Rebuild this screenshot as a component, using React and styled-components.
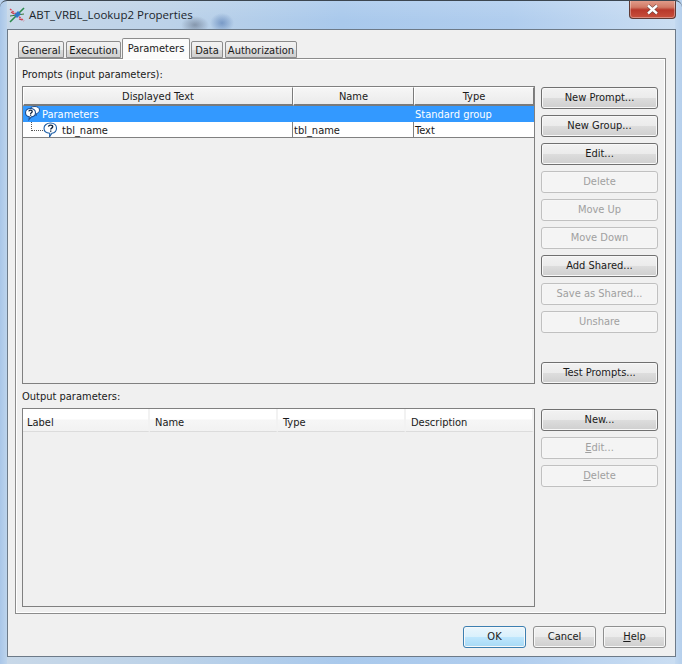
import React from "react";
import styled, { createGlobalStyle } from "styled-components";

const Global = createGlobalStyle`
  html, body { margin: 0; padding: 0; background: #b9d2ee; }
  * { box-sizing: border-box; }
  body { font-family: "DejaVu Sans Condensed", "DejaVu Sans", sans-serif; font-stretch: condensed; font-size: 11px; color: #1a1a1a; }
`;

const Win = styled.div`
  width: 682px; height: 664px; display: flex; flex-direction: column;
  padding: 0 6px 7px 7px; border-radius: 7px 7px 0 0; overflow: hidden;
  border-top: 1px solid #3c4650;
  background:
    radial-gradient(ellipse 12px 10px at 222px 22px, rgba(70,110,170,.55), transparent),
    radial-gradient(ellipse 14px 9px at 195px 24px, rgba(70,80,100,.45), transparent),
    linear-gradient(90deg, #a9c6e8 0, #bdd4ec 7px, transparent 7px, transparent 675px, #c3d9f0 675px, #b5cfec 682px),
    linear-gradient(180deg, rgba(255,255,255,.12), transparent 20px),
    linear-gradient(90deg, #c8d8e8 0%, #bcd2e8 25%, #a9c9ec 50%, #b0cdee 75%, #cbdef2 100%);
`;
const TitleBar = styled.div`
  height: 28px; flex: none; display: flex; align-items: flex-start; gap: 4px; padding-left: 1px;
`;
const AppIcon = styled.svg`width: 16px; height: 16px; margin: 6px 0 0 1px; flex: none;`;
const TitleText = styled.div`
  font-family: "Open Sans", sans-serif; font-stretch: normal; font-size: 11.5px; line-height: 16px; margin-top: 6px; color: #20262c;
`;
const Close = styled.div`
  margin-left: auto; width: 47px; height: 19px; margin-top: -1px; flex: none;
  display: flex; align-items: center; justify-content: center;
  border: 1px solid #5f3a34; border-top: none; border-radius: 0 0 4px 4px;
  background: linear-gradient(180deg, #e4a08e 0%, #d27a66 40%, #b8382a 55%, #c8503c 100%);
  box-shadow: inset 0 0 0 1px rgba(255,255,255,.35);
`;
const Client = styled.div`
  flex: 1; display: flex; flex-direction: column; background: #f0f0f0;
  border: 1px solid #6d7a88; padding: 8px 9px 7px 7px; min-height: 0;
`;
const TabStrip = styled.div`display: flex; align-items: flex-end; height: 21px; padding-left: 3px; position: relative; z-index: 1;`;
const Tab = styled.div`
  width: ${p => p.$w}px; margin-left: ${p => p.$ml || 0}px;
  height: ${p => (p.$active ? 21 : 17)}px;
  display: flex; align-items: ${p => (p.$active ? "flex-start" : "center")}; justify-content: center;
  padding-top: ${p => (p.$active ? 2 : 1)}px;
  line-height: 15px; color: #1a1a1a;
  border: 1px solid #8c8c8c; border-bottom: ${p => (p.$active ? "none" : "1px solid #8c8c8c")};
  border-radius: 2px 2px 0 0;
  background: ${p => (p.$active ? "#fbfbfb" : "linear-gradient(180deg,#f2f2f2 0%,#ebebeb 50%,#dcdcdc 51%,#cfcfcf 100%)")};
  margin-bottom: ${p => (p.$active ? 0 : 1)}px;
`;
const Panel = styled.div`
  flex: none; width: 651px; height: 556px; margin-top: -1px;
  border: 1px solid #8c8c8c; box-shadow: inset 0 0 0 1px #fff;
  background: #f0f0f0; padding: 7px 6px 0 6px; display: flex; gap: 6px;
`;
const Col = styled.div`width: 513px; flex: none; display: flex; flex-direction: column;`;
const Label = styled.div`height: 15px; line-height: 17px; margin-bottom: ${p => p.$mb}px; margin-top: ${p => p.$mt || 0}px;`;
const Table = styled.div`
  height: ${p => p.$h}px; flex: none; background: #f0f0f0; border: 1px solid #808080;
`;
const PromptGrid = styled.div`display: grid; grid-template-columns: 270px 121px 120px;`;
const Head = styled.div`
  height: 19px; line-height: 18px; text-align: center;
  border: 1px solid #fff; border-right-color: #7a7a7a; border-bottom: 2px solid #7a7a7a;
  background: linear-gradient(180deg, #f6f6f6, #ebebeb);
`;
const Row = styled.div`
  display: grid; grid-column: 1 / -1; grid-template-columns: 270px 121px 120px; height: 16px;
  background: ${p => (p.$sel ? "#3399ff" : "#fff")}; color: ${p => (p.$sel ? "#fff" : "#1a1a1a")};
  border-bottom: ${p => (p.$sel ? "none" : "1px solid #808080")};
`;
const Cell = styled.div`
  height: 16px; line-height: 17px; padding-left: 1px; display: flex; align-items: flex-start; white-space: nowrap;
  border-right: ${p => (p.$line ? "1px solid #808080" : "none")};
`;
const Connector = styled.span`
  width: 12px; height: 9px; margin-left: 7px; flex: none;
  border-left: 1px dotted #555; border-bottom: 1px dotted #555;
`;
const Bubble = styled.svg`width: 16px; height: 16px; flex: none; margin-right: ${p => p.$mr}px;`;
const OutGrid = styled.div`display: grid; grid-template-columns: 127px 128px 128px 1fr;`;
const OutHead = styled.div`
  height: 23px; line-height: 27px; padding-left: 5px;
  border-right: 2px solid #f2f2f2; border-bottom: 1px solid #dcdcdc;
  background: linear-gradient(180deg, #fff 0%, #fff 45%, #f6f6f6 50%, #f2f2f2 100%);
  &:first-child { padding-left: 4px; }
`;
const Side = styled.div`width: 117px; flex: none; display: flex; flex-direction: column; gap: 6px; padding-top: 21px;`;
const Btn = styled.div`
  height: 22px; flex: none; display: flex; align-items: center; justify-content: center;
  width: ${p => p.$w || 117}px; margin-top: ${p => p.$mt || 0}px; border-radius: 3px; padding-bottom: 2px;
  border: 1px solid ${p => (p.$def ? "#3c7fb1" : p.$off ? "#c0c0c0" : p.$soft ? "#8e8f8f" : "#707070")};
  color: ${p => (p.$off ? "#a0a0a0" : "#1a1a1a")};
  box-shadow: inset 0 0 0 1px ${p => (p.$off ? "#f6f6f6" : "#f8f8f8")};
  background: ${p => p.$off ? "#f4f4f4" : p.$def
    ? "linear-gradient(180deg,#eaf6fd 0%,#d9f0fc 50%,#bee6fd 51%,#a7d9f5 100%)"
    : "linear-gradient(180deg,#f2f2f2 0%,#ebebeb 50%,#dddddd 51%,#cfcfcf 100%)"};
`;
const Footer = styled.div`display: flex; justify-content: flex-end; gap: 7px; margin-top: 12px;`;

function Ask({ mr, group }) {
  return (
    <Bubble $mr={mr} viewBox="0 0 16 16">
      {group && (
        <path d="M7 1.5c1-.8 2.5-1 4-1 2.7 0 4.5 1.6 4.5 3.6 0 1.7-1.3 3-3 3.4l-.3 2.2-1.7-2z" fill="#fff" stroke="#1d4f91" />
      )}
      {group ? (
        <>
          <path d="M6.5 2.5c3 0 5 1.8 5 4.2s-2 4-4.2 4.2L5 13.5l.3-2.7C3 10.4 1.5 8.9 1.5 6.7c0-2.4 2-4.2 5-4.2z" fill="#fff" stroke="#1d4f91" strokeWidth="1.1" />
          <path d="M4.8 5.4c.2-.8.9-1.2 1.7-1.2 1 0 1.7.5 1.7 1.3 0 1.2-1.6 1.2-1.6 2.4M6.6 8.6v1.1" fill="none" stroke="#10253f" strokeWidth="1.3" />
        </>
      ) : (
        <>
          <path d="M7.5 1c3.6 0 6 2.2 6 5.2 0 2.7-2 4.7-4.6 5L6.5 15l.3-3.8C3.4 11 1 9 1 6.2 1 3.2 3.9 1 7.5 1z" fill="#fff" stroke="#1d5fa8" strokeWidth="1.1" />
          <path d="M5.4 4.6c.3-1 1.2-1.5 2.2-1.5 1.3 0 2.1.7 2.1 1.6 0 1.4-2 1.4-2 2.9M7.7 8.4v1.3" fill="none" stroke="#10253f" strokeWidth="1.4" />
        </>
      )}
    </Bubble>
  );
}

const sideTop = [
  ["New Prompt..."], ["New Group..."], ["Edit..."], ["Delete", 1], ["Move Up", 1], ["Move Down", 1],
  ["Add Shared..."], ["Save as Shared...", 1], ["Unshare", 1],
];

export default function App() {
  return (
    <>
      <Global />
      <Win>
        <TitleBar>
          <AppIcon viewBox="0 0 16 16">
            <path d="M1 2l14 12" stroke="#d9475a" strokeWidth="1.4" strokeDasharray="2 1" />
            <path d="M15 1L1 15" stroke="#2a8a4a" strokeWidth="1.6" />
            <path d="M1 9l14-2" stroke="#3a7a3a" strokeWidth="1" />
            <path d="M5 8l4-4 3 3-4 4z" fill="#2f78c8" />
            <path d="M2 5l3 2M10 12l3 1" stroke="#c43a4a" strokeWidth="1.2" />
          </AppIcon>
          <TitleText>ABT_VRBL_Lookup2 Properties</TitleText>
          <Close>
            <svg width="15" height="11" viewBox="0 0 15 11">
              <path d="M3 1.5l9 8M12 1.5l-9 8" stroke="#5a3a36" strokeWidth="3.6" />
              <path d="M3 1.5l9 8M12 1.5l-9 8" stroke="#fff" strokeWidth="2.4" />
            </svg>
          </Close>
        </TitleBar>
        <Client>
          <TabStrip>
            <Tab $w={46}>General</Tab>
            <Tab $w={55} $ml={2}>Execution</Tab>
            <Tab $w={68} $ml={1} $active>Parameters</Tab>
            <Tab $w={32} $ml={1}>Data</Tab>
            <Tab $w={72} $ml={2}>Authorization</Tab>
          </TabStrip>
          <Panel>
            <Col>
              <Label $mb={5}>Prompts (input parameters):</Label>
              <Table $h={298}>
                <PromptGrid>
                  <Head>Displayed Text</Head>
                  <Head>Name</Head>
                  <Head>Type</Head>
                  <Row $sel>
                    <Cell><Ask mr={2} group />Parameters</Cell>
                    <Cell />
                    <Cell>Standard group</Cell>
                  </Row>
                  <Row>
                    <Cell $line><Connector /><Ask mr={3} />tbl_name</Cell>
                    <Cell $line>tbl_name</Cell>
                    <Cell>Text</Cell>
                  </Row>
                </PromptGrid>
              </Table>
              <Label $mt={4} $mb={5}>Output parameters:</Label>
              <Table $h={199}>
                <OutGrid>
                  <OutHead>Label</OutHead>
                  <OutHead>Name</OutHead>
                  <OutHead>Type</OutHead>
                  <OutHead>Description</OutHead>
                </OutGrid>
              </Table>
            </Col>
            <Side>
              {sideTop.map(([t, off]) => <Btn key={t} $off={off}>{t}</Btn>)}
              <Btn $mt={23}>Test Prompts...</Btn>
              <Btn $mt={19}>New...</Btn>
              <Btn $off><span><u>E</u>dit...</span></Btn>
              <Btn $off><span><u>D</u>elete</span></Btn>
            </Side>
          </Panel>
          <Footer>
            <Btn $w={63} $def>OK</Btn>
            <Btn $w={63} $soft>Cancel</Btn>
            <Btn $w={63} $soft><span><u>H</u>elp</span></Btn>
          </Footer>
        </Client>
      </Win>
    </>
  );
}
